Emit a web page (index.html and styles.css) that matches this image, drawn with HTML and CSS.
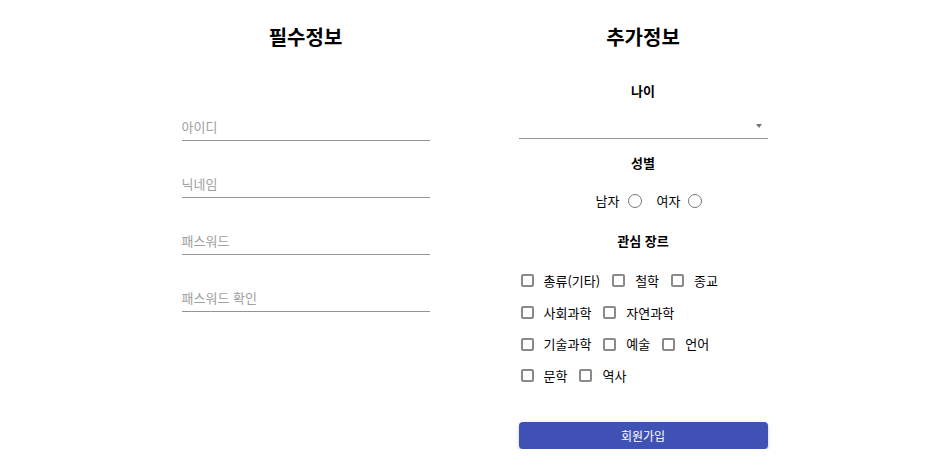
FILE: index.html
```html
<!DOCTYPE html>
<html lang="ko">
<head>
<meta charset="utf-8">
<title>회원가입</title>
<link rel="stylesheet" href="styles.css">
</head>
<body>
<div class="page">
  <section class="col">
    <h2 class="title">필수정보</h2>
    <div class="fields">
      <div class="field"><input class="input" type="text" placeholder="아이디"></div>
      <div class="field"><input class="input" type="text" placeholder="닉네임"></div>
      <div class="field"><input class="input" type="password" placeholder="패스워드"></div>
      <div class="field"><input class="input" type="password" placeholder="패스워드 확인"></div>
    </div>
  </section>
  <section class="col col-right">
    <h2 class="title">추가정보</h2>
    <div class="label label-age">나이</div>
    <div class="select"><span class="arrow"></span></div>
    <div class="label label-gender">성별</div>
    <div class="radios">
      <label class="radio-item"><span>남자</span><span class="radio"></span></label>
      <label class="radio-item"><span>여자</span><span class="radio"></span></label>
    </div>
    <div class="label label-genre">관심 장르</div>
    <div class="checks">
      <div class="check-row">
        <label class="check-item"><span class="box"></span><span>총류(기타)</span></label>
        <label class="check-item"><span class="box"></span><span>철학</span></label>
        <label class="check-item"><span class="box"></span><span>종교</span></label>
      </div>
      <div class="check-row">
        <label class="check-item"><span class="box"></span><span>사회과학</span></label>
        <label class="check-item"><span class="box"></span><span>자연과학</span></label>
      </div>
      <div class="check-row">
        <label class="check-item"><span class="box"></span><span>기술과학</span></label>
        <label class="check-item"><span class="box"></span><span>예술</span></label>
        <label class="check-item"><span class="box"></span><span>언어</span></label>
      </div>
      <div class="check-row">
        <label class="check-item"><span class="box"></span><span>문학</span></label>
        <label class="check-item"><span class="box"></span><span>역사</span></label>
      </div>
    </div>
    <button class="submit" type="button">회원가입</button>
  </section>
</div>
</body>
</html>
```
FILE: styles.css
```css
* { box-sizing: border-box; }
html, body { margin: 0; padding: 0; background: #fff; }
body {
  font-family: "Noto Sans CJK KR", "Noto Sans", sans-serif;
  color: #000;
  font-size: 13px;
}
.page {
  display: flex;
  justify-content: center;
  gap: 89px;
}
.col {
  width: 248px;
  display: flex;
  flex-direction: column;
}
.col-right { width: 249px; }
.title {
  margin: 0;
  padding-top: 24px;
  line-height: 26px;
  font-size: 20px;
  font-weight: 700;
  text-align: center;
}
.fields {
  padding-top: 34px;
}
.field {
  height: 57px;
  display: flex;
  flex-direction: column;
  justify-content: flex-end;
}
.input {
  width: 100%;
  height: 23px;
  padding: 0 0 5px 0;
  border: none;
  border-bottom: 1px solid #949494;
  font-family: inherit;
  font-size: 13px;
  color: #000;
  background: transparent;
  outline: none;
}
.input::placeholder { color: #a0a0a0; }
.label {
  text-align: center;
  line-height: 20px;
  font-size: 13px;
  font-weight: 700;
}
.label-age { margin-top: 31px; }
.select {
  height: 38px;
  border-bottom: 1px solid #949494;
  display: flex;
  justify-content: flex-end;
  align-items: flex-end;
  padding: 0 6px 10px 0;
}
.arrow {
  width: 0;
  height: 0;
  border-left: 3.5px solid transparent;
  border-right: 3.5px solid transparent;
  border-top: 4px solid #757575;
}
.label-gender { margin-top: 14px; }
.radios {
  margin-top: 18px;
  height: 20px;
  display: flex;
  justify-content: center;
  align-items: center;
  gap: 15px;
  padding-left: 12px;
}
.radio-item {
  display: flex;
  align-items: center;
  gap: 8px;
  line-height: 20px;
}
.radio {
  width: 14px;
  height: 14px;
  border: 1.8px solid #777;
  border-radius: 50%;
}
.label-genre { margin-top: 20px; }
.checks { margin-top: 14.2px; }
.check-row {
  height: 31.6px;
  display: flex;
  align-items: center;
  padding-left: 2px;
}
.check-item {
  display: flex;
  align-items: center;
  gap: 10px;
  margin-right: 12px;
  line-height: 20px;
}
.box {
  width: 13px;
  height: 13px;
  border: 2px solid #8a8a8a;
  border-radius: 2px;
}
.submit {
  margin-top: 30.4px;
  height: 27px;
  width: 100%;
  border: none;
  border-radius: 4px;
  background: #3f51b5;
  color: #fff;
  font-family: inherit;
  font-size: 12px;
  box-shadow: 0 3px 1px -2px rgba(0,0,0,.2), 0 2px 2px 0 rgba(0,0,0,.14), 0 1px 5px 0 rgba(0,0,0,.12);
}
```
